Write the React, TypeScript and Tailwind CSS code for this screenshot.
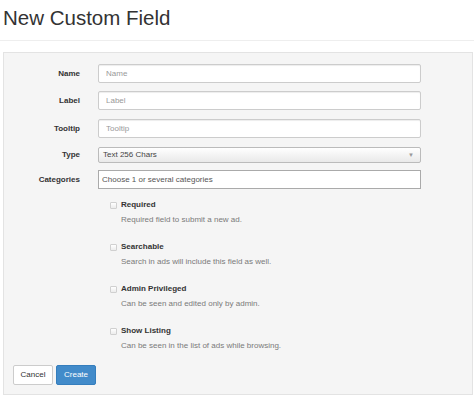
import React from 'react'

interface Option {
  title: string
  help: string
}

const options: Option[] = [
  { title: 'Required', help: 'Required field to submit a new ad.' },
  { title: 'Searchable', help: 'Search in ads will include this field as well.' },
  { title: 'Admin Privileged', help: 'Can be seen and edited only by admin.' },
  { title: 'Show Listing', help: 'Can be seen in the list of ads while browsing.' },
]

function FieldLabel({ children }: { children: React.ReactNode }) {
  return (
    <label className="w-[76px] shrink-0 text-right text-[8px] font-bold leading-[12px] text-[#333]">
      {children}
    </label>
  )
}

function TextInput({ placeholder }: { placeholder: string }) {
  return (
    <input
      type="text"
      readOnly
      placeholder={placeholder}
      className="ml-[18px] h-[19px] w-[323px] rounded-[2px] border border-[#ccc] bg-white px-[7px] text-[8px] text-[#555] shadow-[inset_0_1px_1px_rgba(0,0,0,0.075)] outline-none placeholder:text-[#999]"
    />
  )
}

export default function App() {
  return (
    <div className="h-[397px] w-[474px] overflow-hidden bg-white font-['Liberation_Sans',Arial,sans-serif] text-[#333]">
      <h1 className="pl-[3px] pt-[6px] text-[20.5px] font-normal leading-[24px] text-[#333]">New Custom Field</h1>
      <div className="mt-[10px] h-px bg-[#eee]" />

      {/* Form panel */}
      <div className="ml-[3px] mt-[11px] w-[470px] border border-[#e3e3e3] bg-[#f5f5f5] pb-[9px] pt-[11px]">
        <div className="flex items-center">
          <FieldLabel>Name</FieldLabel>
          <TextInput placeholder="Name" />
        </div>
        <div className="mt-[8px] flex items-center">
          <FieldLabel>Label</FieldLabel>
          <TextInput placeholder="Label" />
        </div>
        <div className="mt-[9px] flex items-center">
          <FieldLabel>Tooltip</FieldLabel>
          <TextInput placeholder="Tooltip" />
        </div>
        <div className="mt-[9px] flex items-center">
          <FieldLabel>Type</FieldLabel>
          <div className="ml-[18px] flex h-[16px] w-[323px] items-center justify-between rounded-[2px] border border-[#bbb] bg-gradient-to-b from-white to-[#e9e9e9] pl-[4px] pr-[6px] text-[8px] text-[#444]">
            <span>Text 256 Chars</span>
            <span className="text-[6px] text-[#999]">▼</span>
          </div>
        </div>
        <div className="mt-[7px] flex items-center">
          <FieldLabel>Categories</FieldLabel>
          <div className="ml-[18px] flex h-[19px] w-[323px] items-center border border-[#aaa] bg-white pl-[3px] text-[8px] text-[#555]">
            Choose 1 or several categories
          </div>
        </div>

        {/* Checkbox options */}
        <div className="ml-[106px] mt-[10px] flex flex-col gap-[15px]">
          {options.map((opt) => (
            <div key={opt.title} className="flex flex-col">
              <div className="flex h-[12px] items-center">
                <span className="h-[7px] w-[7px] rounded-[1px] border border-[#d0d0d0] bg-gradient-to-b from-white to-[#ececec]" />
                <span className="ml-[4px] text-[8px] font-bold leading-[12px] text-[#333]">{opt.title}</span>
              </div>
              <div className="mt-[3px] pl-[11px] text-[8px] leading-[12px] text-[#7a7a7a]">{opt.help}</div>
            </div>
          ))}
        </div>

        {/* Actions */}
        <div className="ml-[9px] mt-[13px] flex gap-[3px]">
          <button className="h-[20px] w-[40px] rounded-[2px] border border-[#ccc] bg-white text-[8px] text-[#333]">
            Cancel
          </button>
          <button className="h-[20px] w-[40px] rounded-[2px] border border-[#357ebd] bg-[#428bca] text-[8px] text-white">
            Create
          </button>
        </div>
      </div>
    </div>
  )
}
